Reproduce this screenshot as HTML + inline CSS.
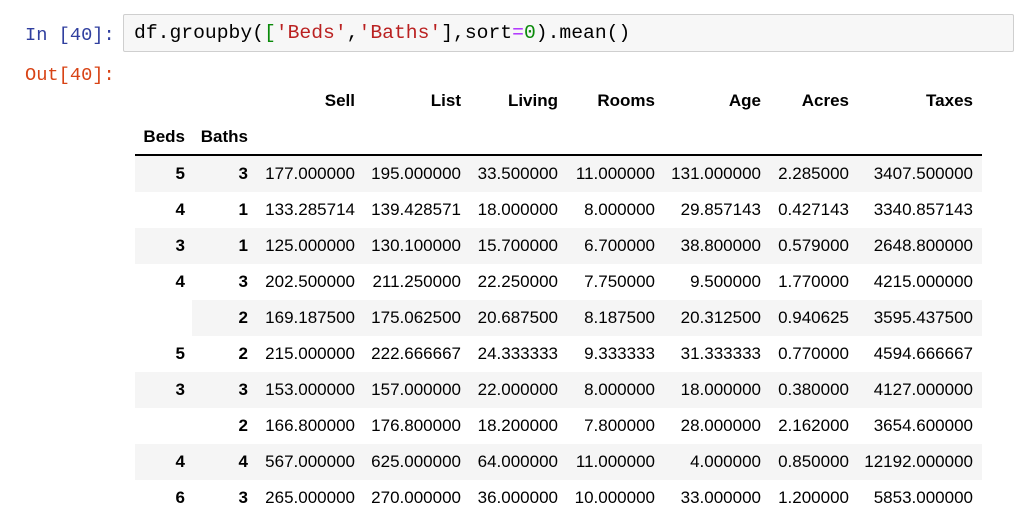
<!DOCTYPE html>
<html><head><style>
body{margin:0;width:1024px;height:514px;background:#fff;overflow:hidden;position:relative;font-family:"Liberation Sans",Arial,sans-serif;}
.p{position:absolute;font-family:"Liberation Mono",monospace;font-size:18.7px;}
.code{position:absolute;left:123px;top:14px;width:891px;height:38px;border:1px solid #cfcfcf;background:#f7f7f7;border-radius:2px;box-sizing:border-box;}
.code span.t{position:absolute;left:10px;top:7px;font-family:"Liberation Mono",monospace;font-size:19.7px;color:#000;white-space:pre;}
.row{position:absolute;left:135px;width:847px;height:36px;}
.c{position:absolute;top:0;line-height:36px;font-size:17px;color:#000;text-align:right;white-space:nowrap;}
.b{font-weight:bold;}
</style></head><body>
<div class="p" style="left:25px;top:24px;color:#303F9F">In [40]:</div>
<div class="code"><span class="t">df.groupby(<span style="color:#0a8a0a">[</span><span style="color:#ba2121">'Beds'</span>,<span style="color:#ba2121">'Baths'</span>],sort<span style="color:#aa22ff">=</span><span style="color:#0a8a0a">0</span>).mean()</span></div>
<div class="p" style="left:25px;top:64px;color:#D84315">Out[40]:</div>
<div style="position:absolute;left:135px;top:154px;width:847px;height:2px;background:#000"></div>
<script>
const R=[185,248,355,461,558,655,761,849,973];
function cell(parent,right,txt,bold){const s=document.createElement('div');s.className='c'+(bold?' b':'');s.style.right=(982-right)+'px';s.textContent=txt;parent.appendChild(s);}
function row(top,bg,bgLeft,cells,bold){const d=document.createElement('div');d.className='row';d.style.top=top+'px';
if(bg){const g=document.createElement('div');g.style.cssText='position:absolute;top:0;bottom:0;right:0;left:'+bgLeft+'px;background:#f5f5f5';d.appendChild(g);}
cells.forEach((t,i)=>{if(t!==null)cell(d,R[i],t,bold||i<2);});document.body.appendChild(d);}
row(83,false,0,[null,null,'Sell','List','Living','Rooms','Age','Acres','Taxes'],true);
row(119,false,0,['Beds','Baths',null,null,null,null,null,null,null],true);
const D=[
['5','3','177.000000','195.000000','33.500000','11.000000','131.000000','2.285000','3407.500000'],
['4','1','133.285714','139.428571','18.000000','8.000000','29.857143','0.427143','3340.857143'],
['3','1','125.000000','130.100000','15.700000','6.700000','38.800000','0.579000','2648.800000'],
['4','3','202.500000','211.250000','22.250000','7.750000','9.500000','1.770000','4215.000000'],
['','2','169.187500','175.062500','20.687500','8.187500','20.312500','0.940625','3595.437500'],
['5','2','215.000000','222.666667','24.333333','9.333333','31.333333','0.770000','4594.666667'],
['3','3','153.000000','157.000000','22.000000','8.000000','18.000000','0.380000','4127.000000'],
['','2','166.800000','176.800000','18.200000','7.800000','28.000000','2.162000','3654.600000'],
['4','4','567.000000','625.000000','64.000000','11.000000','4.000000','0.850000','12192.000000'],
['6','3','265.000000','270.000000','36.000000','10.000000','33.000000','1.200000','5853.000000']];
D.forEach((r,i)=>row(156+36*i,i%2==0,(i==4)?57:0,r,false));
</script>
</body></html>
